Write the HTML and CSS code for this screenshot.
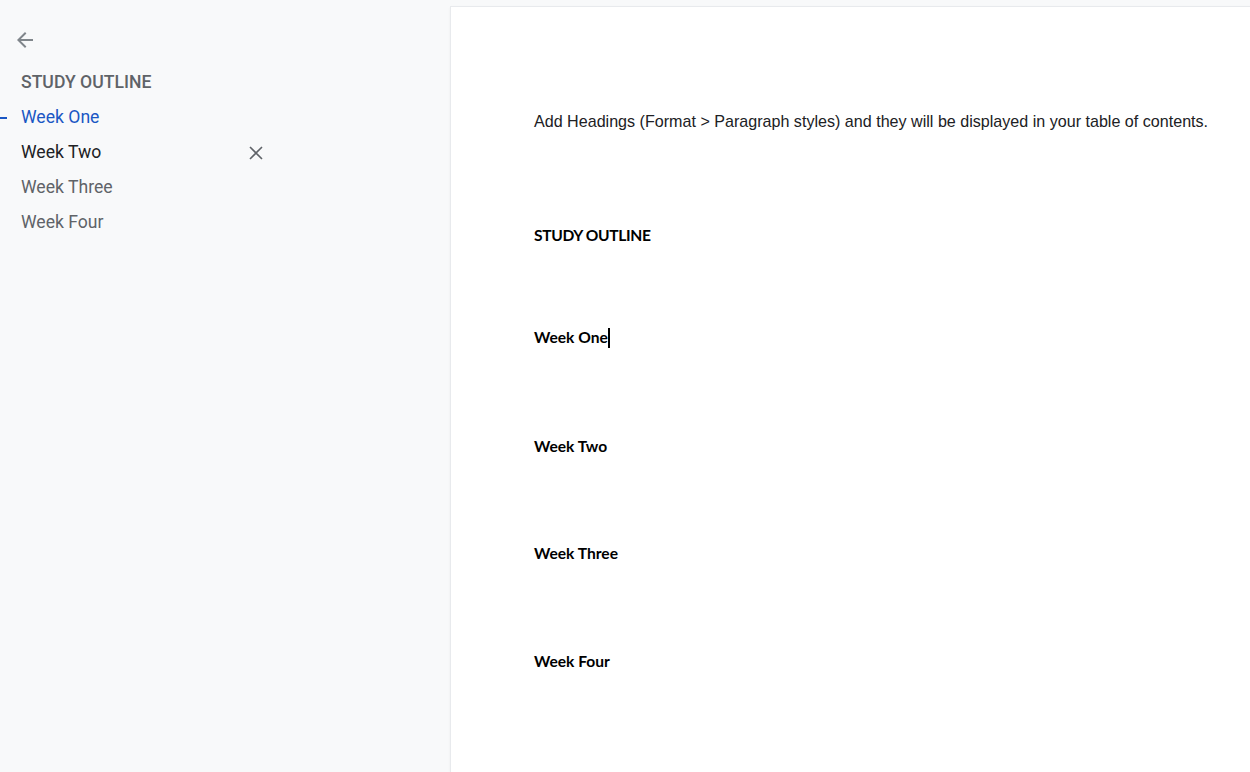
FILE: index.html
```html
<!DOCTYPE html>
<html lang="en">
<head>
    <meta charset="UTF-8">
    <title>Study Outline</title>
    <link rel="stylesheet" href="styles.css">
</head>
<body>
    <!-- Panel del esquema -->
    <aside class="outline">
        <button class="back-btn" aria-label="Back">
            <svg width="24" height="24" viewBox="0 0 24 24"><path d="M20 11H7.83l5.59-5.59L12 4l-8 8 8 8 1.41-1.41L7.83 13H20v-2z" fill="#80868b"/></svg>
        </button>
        <ul class="outline-list">
            <li class="item title">STUDY OUTLINE</li>
            <li class="item active">Week One</li>
            <li class="item hover">Week Two
                <svg class="close" width="14" height="14" viewBox="0 0 14 14"><path d="M1 1L13 13M13 1L1 13" stroke="#5f6368" stroke-width="1.6"/></svg>
            </li>
            <li class="item">Week Three</li>
            <li class="item">Week Four</li>
        </ul>
    </aside>

    <!-- Hoja del documento -->
    <main class="page">
        <p class="hint">Add Headings (Format &gt; Paragraph styles) and they will be displayed in your table of contents.</p>
        <h2 class="heading caps">STUDY OUTLINE</h2>
        <h2 class="heading first">Week One<span class="caret"></span></h2>
        <h2 class="heading">Week Two</h2>
        <h2 class="heading">Week Three</h2>
        <h2 class="heading">Week Four</h2>
    </main>
</body>
</html>
```

FILE: styles.css
```css
body {
    margin: 0;
    height: 100vh;
    display: flex;
    background-color: #f8f9fa;
    overflow: hidden;
    font-family: Roboto, Arial, sans-serif;
}

/* Esquema */
.outline {
    width: 451px;
    flex-shrink: 0;
    padding-top: 28px;
    box-sizing: border-box;
}

.back-btn {
    margin-left: 13px;
    padding: 0;
    border: none;
    background: none;
    width: 24px;
    height: 24px;
    display: block;
    cursor: pointer;
}

.outline-list {
    list-style: none;
    margin: 13px 0 0;
    padding: 0;
    width: 280px;
}

.item {
    position: relative;
    height: 35px;
    line-height: 35px;
    padding-left: 21px;
    font-size: 17.6px;
    color: #5f6368;
    display: flex;
    align-items: center;
}

.item.title {
    font-weight: 500;
}

.item.active {
    color: #1a57c4;
}

.item.active::before {
    content: "";
    position: absolute;
    left: 0;
    top: 17px;
    width: 7px;
    height: 2px;
    background-color: #1a57c4;
}

.item.hover {
    color: #202124;
}

.close {
    margin-left: auto;
    margin-right: 17px;
}

/* Documento */
.page {
    flex: 1;
    margin-top: 7px;
    background-color: white;
    box-shadow: 0 0 0 1px #e8eaed, 0 1px 3px rgba(60, 64, 67, 0.12);
    padding: 104px 0 0 83px;
}

.hint {
    margin: 0;
    font-family: Arial, "Liberation Sans", sans-serif;
    font-size: 16.1px;
    color: #202124;
    line-height: 20px;
}

.heading {
    margin: 0;
    font-family: Lato, "Open Sans", sans-serif;
    font-size: 15.6px;
    font-weight: bold;
    color: black;
    line-height: 20px;
}

.heading.caps {
    letter-spacing: -0.35px;
}

.hint + .heading {
    margin-top: 94px;
}

.heading + .heading {
    margin-top: 87.5px;
}

.heading.first {
    margin-top: 82px;
}

.caret {
    display: inline-block;
    width: 2px;
    height: 20px;
    background-color: black;
    vertical-align: -5px;
    margin-left: 0;
}
```
